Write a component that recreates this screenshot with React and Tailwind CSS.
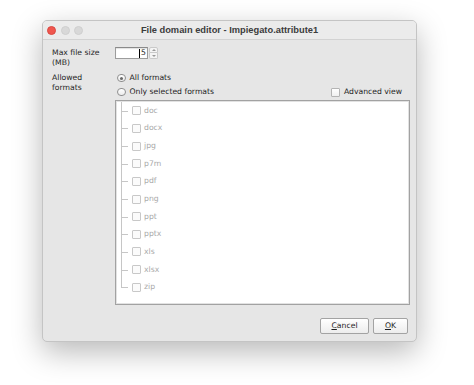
import React from "react";

const FORMATS = ["doc", "docx", "jpg", "p7m", "pdf", "png", "ppt", "pptx", "xls", "xlsx", "zip"];

function TreeRow({ label, last }) {
  return (
    <div className="flex h-[17.65px] items-center pl-[5px]">
      <div className="relative h-full w-[7px] shrink-0">
        <span className={"absolute left-0 top-0 w-px bg-[#c6c6c6] " + (last ? "h-1/2" : "h-full")} />
        <span className="absolute left-0 top-1/2 h-px w-[7px] bg-[#c6c6c6]" />
      </div>
      <span className="ml-[4px] h-[9px] w-[9px] shrink-0 rounded-[1px] border border-[#c8c8c8] bg-[#fbfbfb]" />
      <span className="ml-[3px] text-[#a9a9a9]">{label}</span>
    </div>
  );
}

function Radio({ checked }) {
  return (
    <span className="flex h-[8.5px] w-[8.5px] shrink-0 items-center justify-center rounded-full border border-[#8f8f8f] bg-gradient-to-b from-white to-[#ececec]">
      {checked && <span className="h-[3px] w-[3px] rounded-full bg-[#6a6a6a]" />}
    </span>
  );
}

export default function App() {
  return (
    <div
      className="h-[385px] w-[474px] bg-white pl-[42px] pt-[20px] text-[7.7px] leading-[10px] text-[#1e1e1e]"
      style={{ fontFamily: '"DejaVu Sans", "Liberation Sans", sans-serif' }}
    >
      <div className="flex h-[322px] w-[375px] flex-col overflow-hidden rounded-[5px] border border-[#c4c4c4] bg-[#e6e6e6] shadow-[0_10px_30px_rgba(0,0,0,0.28)]">
        {/* Title bar */}
        <div className="relative flex h-[19px] shrink-0 items-center border-b border-[#d2d2d2] bg-[#ebebeb] pl-[4px]">
          <div className="flex gap-[4.5px]">
            <span className="h-[9px] w-[9px] rounded-full border border-[#d94a43] bg-[#f0564e]" />
            <span className="h-[9px] w-[9px] rounded-full border border-[#cfcfcf] bg-[#d8d8d8]" />
            <span className="h-[9px] w-[9px] rounded-full border border-[#cfcfcf] bg-[#d8d8d8]" />
          </div>
          <div
            className="absolute inset-0 flex items-center justify-center text-[9.3px] font-bold text-[#3c3c3c]"
            style={{ fontFamily: '"Liberation Sans", Arial, sans-serif' }}
          >
            File domain editor - Impiegato.attribute1
          </div>
        </div>

        {/* Body */}
        <div className="flex flex-1 flex-col pb-[8px] pl-[9px] pr-[6px] pt-[7px]">
          <div className="grid grid-cols-[63px_1fr] gap-y-[3px]">
            <div className="mt-[1px]">
              <div>Max file size</div>
              <div>(MB)</div>
            </div>
            <div className="flex">
              <div className="flex h-[12px] w-[33px] items-center justify-end border border-[#9c9c9c] border-t-[#8a8a8a] bg-white pr-[1px] shadow-[inset_0_1px_1px_rgba(0,0,0,0.12)]">
                <span className="mr-[1px] h-[9px] w-px bg-black" />
                <span>5</span>
              </div>
              <div className="ml-[1px] flex h-[12px] w-[9px] flex-col">
                <div className="flex h-[6px] items-center justify-center rounded-t-[2px] border border-[#c9c9c9] bg-[#f4f4f4]">
                  <span className="h-0 w-0 border-x-[2px] border-b-[2px] border-x-transparent border-b-[#9a9a9a]" />
                </div>
                <div className="flex h-[6px] items-center justify-center rounded-b-[2px] border border-t-0 border-[#c9c9c9] bg-[#f4f4f4]">
                  <span className="h-0 w-0 border-x-[2px] border-t-[2px] border-x-transparent border-t-[#9a9a9a]" />
                </div>
              </div>
            </div>

            <div className="mt-[2px]">
              <div>Allowed</div>
              <div>formats</div>
            </div>
            <div className="flex flex-col">
              <div className="flex h-[14px] items-center pl-[2px]">
                <Radio checked />
                <span className="ml-[4px]">All formats</span>
              </div>
              <div className="flex h-[14px] items-center justify-between pl-[2px] pr-[8px]">
                <div className="flex items-center">
                  <Radio />
                  <span className="ml-[4px]">Only selected formats</span>
                </div>
                <div className="flex items-center">
                  <span className="h-[9px] w-[9px] rounded-[1px] border border-[#b4b4b4] bg-gradient-to-b from-white to-[#f0f0f0]" />
                  <span className="ml-[4px]">Advanced view</span>
                </div>
              </div>
              <div className="mt-[1px] h-[205px] border border-[#a2a2a2] bg-white pt-[1px] shadow-[inset_0_0_0_1px_#e2e2e2]">
                {FORMATS.map((f, i) => (
                  <TreeRow key={f} label={f} last={i === FORMATS.length - 1} />
                ))}
              </div>
            </div>
          </div>

          <div className="mr-[2px] mt-[13px] flex justify-end gap-[4px]">
            <button className="flex h-[16px] w-[49px] items-center justify-center rounded-[2px] border border-[#a3a3a3] bg-gradient-to-b from-white to-[#ededed] text-[7.7px] text-[#1e1e1e]">
              <span><span className="underline">C</span>ancel</span>
            </button>
            <button className="flex h-[16px] w-[35px] items-center justify-center rounded-[2px] border border-[#a3a3a3] bg-gradient-to-b from-white to-[#ededed] text-[7.7px] text-[#1e1e1e]">
              <span><span className="underline">O</span>K</span>
            </button>
          </div>
        </div>
      </div>
    </div>
  );
}
